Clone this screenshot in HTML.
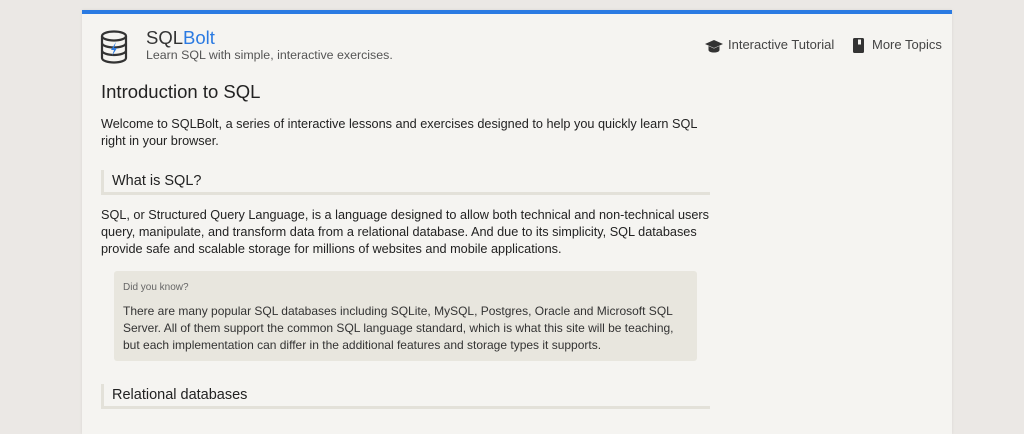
<!DOCTYPE html>
<html><head><meta charset="utf-8"><style>
html,body{margin:0;padding:0;}
body{width:1024px;height:413px;overflow:hidden;background:#ebe8e5;font-family:"Liberation Sans",sans-serif;color:#222;}
.card{position:absolute;left:82px;top:10px;width:870px;height:420px;background:#f5f4f1;border-top:4px solid #2a7ae2;box-shadow:0 0 3px rgba(0,0,0,.08);}
.abs{position:absolute;white-space:nowrap;}
.h2{position:absolute;left:19px;width:606px;height:22px;border-left:3px solid #e3e1d9;border-bottom:3px solid #e3e1d9;}
.h2 span{position:absolute;left:8px;top:3px;font-size:14.5px;color:#222;}
p{margin:0;position:absolute;left:19px;font-size:12.7px;line-height:17px;color:#222;white-space:nowrap;}
</style></head><body>
<div class="card">
<svg class="abs" style="left:18px;top:16px" width="30" height="34" viewBox="0 0 30 34">
<g fill="none" stroke="#333" stroke-width="2.2">
<ellipse cx="14" cy="6" rx="12" ry="4.5"/>
<path d="M2 6v22c0 2.5 5.5 4.5 12 4.5s12-2 12-4.5V6"/>
<path d="M2 13c0 2.5 5.5 4.5 12 4.5s12-2 12-4.5M2 20.5c0 2.5 5.5 4.5 12 4.5s12-2 12-4.5"/>
</g>
<path d="M16 12l-5 8h3l-2 6 5-8h-3z" fill="#2a7ae2"/>
</svg>
<div class="abs" style="left:64px;top:13px;font-size:18.5px;color:#333">SQL<span style="color:#2a7ae2">Bolt</span></div>
<div class="abs" style="left:64px;top:34px;font-size:12.4px;color:#555">Learn SQL with simple, interactive exercises.</div>
<svg class="abs" style="left:623px;top:25px" width="18" height="14" viewBox="0 0 18 14"><path d="M9 1L0 5l9 4 9-4z" fill="#333"/><path d="M3.5 7v4c0 1.5 2.5 2.5 5.5 2.5s5.5-1 5.5-2.5V7L9 9.5z" fill="#333"/></svg>
<div class="abs" style="left:646px;top:23px;font-size:13px;color:#444">Interactive Tutorial</div>
<svg class="abs" style="left:771px;top:24px" width="11" height="15" viewBox="0 0 11 15"><rect x="0" y="0" width="11" height="15" rx="1.5" fill="#333"/><rect x="5" y="1.5" width="3" height="5" fill="#f5f4f1"/></svg>
<div class="abs" style="left:790px;top:23px;font-size:13px;color:#444">More Topics</div>
<div class="abs" style="left:19px;top:67px;font-size:18.5px;color:#222">Introduction to SQL</div>
<p style="top:102px">Welcome to SQLBolt, a series of interactive lessons and exercises designed to help you quickly learn SQL<br>right in your browser.</p>
<div class="h2" style="top:156px"><span>What is SQL?</span></div>
<p style="top:193px">SQL, or Structured Query Language, is a language designed to allow both technical and non-technical users<br>query, manipulate, and transform data from a relational database. And due to its simplicity, SQL databases<br>provide safe and scalable storage for millions of websites and mobile applications.</p>
<div class="abs" style="left:32px;top:257px;width:583px;height:90px;background:#e8e6de;border-radius:3px;">
<div class="abs" style="left:9px;top:11px;font-size:10px;color:#666">Did you know?</div>
<div class="abs" style="left:9px;top:32px;font-size:12px;line-height:17px;color:#333">There are many popular SQL databases including SQLite, MySQL, Postgres, Oracle and Microsoft SQL<br>Server. All of them support the common SQL language standard, which is what this site will be teaching,<br>but each implementation can differ in the additional features and storage types it supports.</div>
</div>
<div class="h2" style="top:370px"><span>Relational databases</span></div>
</div>
</body></html>
